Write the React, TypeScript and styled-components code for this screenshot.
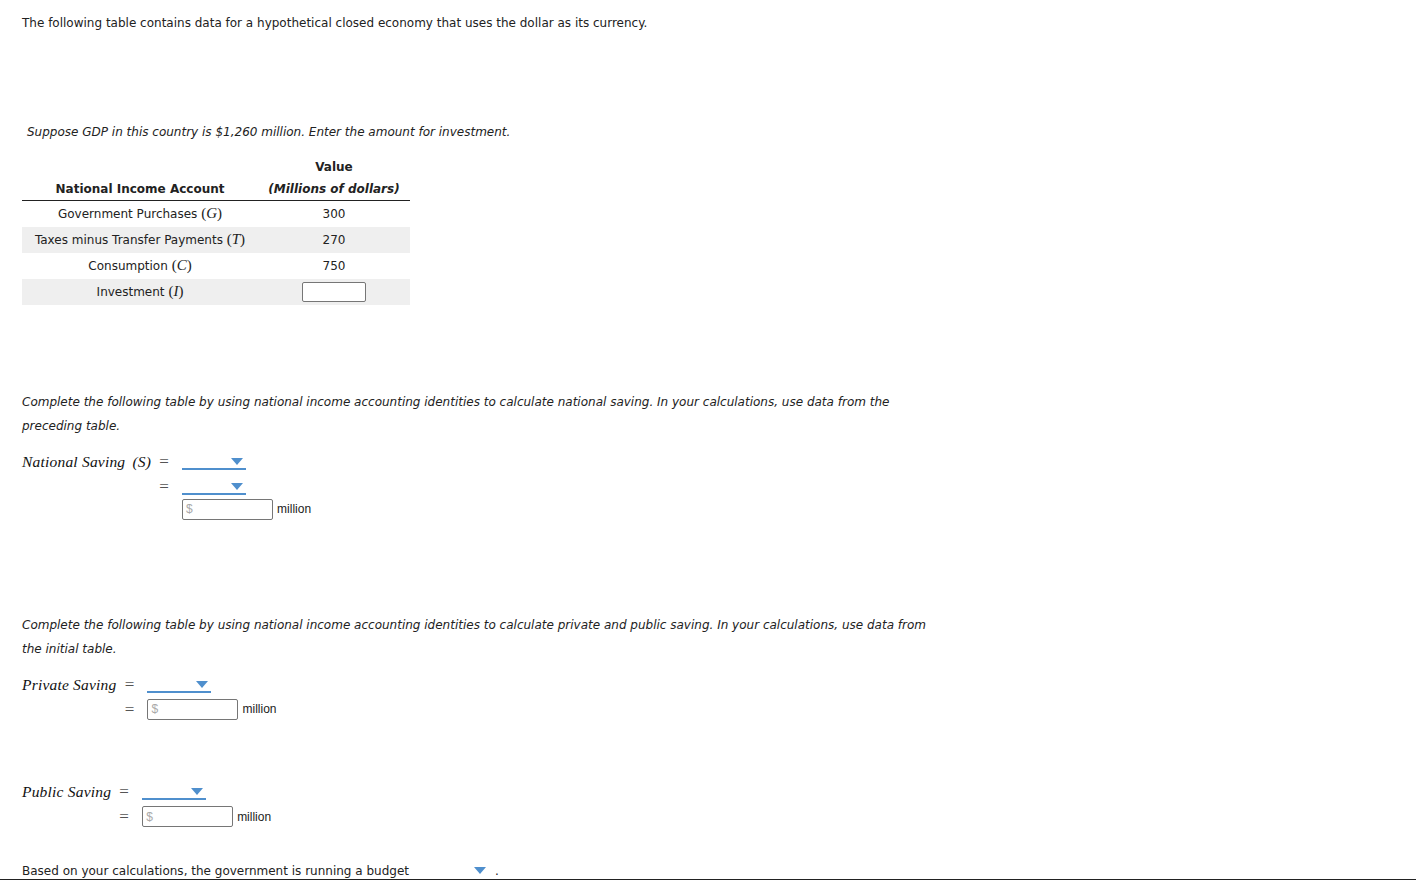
import React from "react";
import styled, { createGlobalStyle } from "styled-components";

const Global = createGlobalStyle`
  html, body { margin: 0; padding: 0; background: #fff; }
  body { font-family: "DejaVu Sans", Verdana, sans-serif; font-size: 12px; color: #222; }
`;

const Page = styled.div`
  padding: 15px 0 0 22px;
  height: 880px;
  box-sizing: border-box;
  overflow: hidden;
  display: flex;
  flex-direction: column;
`;

const Para = styled.p<{ $top?: number; $italic?: boolean }>`
  margin: ${(p) => p.$top ?? 0}px 0 0 0;
  line-height: ${(p) => (p.$italic ? 24 : 16)}px;
  font-style: ${(p) => (p.$italic ? "italic" : "normal")};
  max-width: 912px;
`;

const Prompt = styled.p`
  margin: 93px 0 0 5px;
  line-height: 16px;
  font-style: italic;
`;

const Table = styled.table`
  margin-top: 16px;
  border-collapse: collapse;
  width: 388px;
`;

const Th = styled.th<{ $w: number }>`
  width: ${(p) => p.$w}px;
  font-weight: bold;
  line-height: 22px;
  vertical-align: bottom;
  text-align: center;
  padding: 0;
  border-bottom: 1px solid #222;
`;

const Sub = styled.span`
  display: block;
  font-style: italic;
`;

const Tr = styled.tr<{ $shade?: boolean }>`
  background: ${(p) => (p.$shade ? "#efefef" : "#fff")};
  height: 26px;
`;

const Td = styled.td`
  text-align: center;
  padding: 0;
  vertical-align: middle;
`;

const Var = styled.span`
  font-family: "Liberation Serif", "DejaVu Serif", serif;
  font-style: italic;
  font-size: 15px;
`;

const Paren = styled.span`
  font-family: "Liberation Serif", "DejaVu Serif", serif;
  font-size: 15px;
`;

const CellInput = styled.input`
  width: 64px;
  height: 20px;
  box-sizing: border-box;
  border: 1px solid #767676;
  border-radius: 2px;
  margin: 0;
  vertical-align: middle;
  background: #fff;
`;

const MathGrid = styled.div<{ $top: number }>`
  margin-top: ${(p) => p.$top}px;
  display: grid;
  grid-template-columns: auto 12px auto;
  align-items: center;
  justify-content: start;
`;

const Label = styled.div`
  font-family: "Liberation Serif", "DejaVu Serif", serif;
  font-style: italic;
  font-size: 15.5px;
  letter-spacing: 0.2px;
  color: #111;
  justify-self: end;
  height: 25px;
  line-height: 25px;
  margin-right: 7px;
`;

const Sym = styled.span`
  padding-left: 3px;
`;

const Eq = styled.div`
  grid-column: 2;
  font-family: "Liberation Serif", "DejaVu Serif", serif;
  font-size: 17px;
  color: #555;
  text-align: center;
  height: 25px;
  line-height: 25px;
`;

const Cell = styled.div<{ $h?: number }>`
  grid-column: 3;
  margin-left: 12px;
  height: ${(p) => p.$h ?? 25}px;
  display: flex;
  align-items: center;
`;

const Dropdown = styled.span<{ $w?: number }>`
  position: relative;
  display: inline-block;
  width: ${(p) => p.$w ?? 64}px;
  height: 17px;
  border-bottom: 2px solid #4f8fcd;
  box-sizing: border-box;
  vertical-align: middle;
  &::after {
    content: "";
    position: absolute;
    right: 3px;
    top: 5px;
    border-left: 6.5px solid transparent;
    border-right: 6.5px solid transparent;
    border-top: 7px solid #4f8fcd;
  }
`;

const InlineDrop = styled(Dropdown)`
  height: 16px;
  border-bottom-color: transparent;
  margin: 0 6px 0 16px;
  &::after { top: 4px; }
`;

const MoneyBox = styled.span`
  display: inline-flex;
  align-items: center;
  width: 91px;
  height: 21px;
  box-sizing: border-box;
  border: 1px solid #767676;
  border-radius: 2px;
  padding-left: 3px;
  font-family: "Liberation Sans", Arial, sans-serif;
  font-size: 12px;
  color: #aaa;
`;

const Unit = styled.span`
  font-family: "Liberation Sans", Arial, sans-serif;
  font-size: 12px;
  color: #222;
  margin-left: 4px;
`;

const Gap = styled.div<{ $h: number }>`
  height: ${(p) => p.$h}px;
`;

const Final = styled.div`
  margin-top: 34px;
  line-height: 16px;
  height: 16px;
  display: flex;
  align-items: center;
`;

const Rule = styled.div`
  margin-left: -22px;
  border-top: 1px solid #222;
`;

function Money() {
  return (
    <>
      <MoneyBox>$</MoneyBox>
      <Unit>million</Unit>
    </>
  );
}

export default function App() {
  return (
    <>
      <Global />
      <Page>
        <Para>
          The following table contains data for a hypothetical closed economy that uses the dollar as its currency.
        </Para>
        <Prompt>Suppose GDP in this country is $1,260 million. Enter the amount for investment.</Prompt>
        <Table>
          <thead>
            <tr>
              <Th $w={236}>National Income Account</Th>
              <Th $w={152}>
                Value
                <Sub>(Millions of dollars)</Sub>
              </Th>
            </tr>
          </thead>
          <tbody>
            <Tr>
              <Td>
                Government Purchases <Paren>(</Paren><Var>G</Var><Paren>)</Paren>
              </Td>
              <Td>300</Td>
            </Tr>
            <Tr $shade>
              <Td>
                Taxes minus Transfer Payments <Paren>(</Paren><Var>T</Var><Paren>)</Paren>
              </Td>
              <Td>270</Td>
            </Tr>
            <Tr>
              <Td>
                Consumption <Paren>(</Paren><Var>C</Var><Paren>)</Paren>
              </Td>
              <Td>750</Td>
            </Tr>
            <Tr $shade>
              <Td>
                Investment <Paren>(</Paren><Var>I</Var><Paren>)</Paren>
              </Td>
              <Td>
                <CellInput aria-label="Investment" />
              </Td>
            </Tr>
          </tbody>
        </Table>

        <Para $italic $top={85}>
          Complete the following table by using national income accounting identities to calculate national saving. In your
          calculations, use data from the preceding table.
        </Para>
        <MathGrid $top={11}>
          <Label>
            National Saving <Sym>(S)</Sym>
          </Label>
          <Eq>=</Eq>
          <Cell>
            <Dropdown />
          </Cell>
          <Eq>=</Eq>
          <Cell>
            <Dropdown />
          </Cell>
          <Cell $h={21}>
            <Money />
          </Cell>
        </MathGrid>

        <Para $italic $top={93}>
          Complete the following table by using national income accounting identities to calculate private and public saving.
          In your calculations, use data from the initial table.
        </Para>
        <MathGrid $top={11}>
          <Label>Private Saving</Label>
          <Eq>=</Eq>
          <Cell>
            <Dropdown />
          </Cell>
          <Eq>=</Eq>
          <Cell>
            <Money />
          </Cell>
        </MathGrid>
        <Gap $h={62} />
        <MathGrid $top={0}>
          <Label>Public Saving</Label>
          <Eq>=</Eq>
          <Cell>
            <Dropdown />
          </Cell>
          <Eq>=</Eq>
          <Cell>
            <Money />
          </Cell>
        </MathGrid>

        <Final>
          Based on your calculations, the government is running a budget
          <InlineDrop />.
        </Final>
        <Rule />
      </Page>
    </>
  );
}
